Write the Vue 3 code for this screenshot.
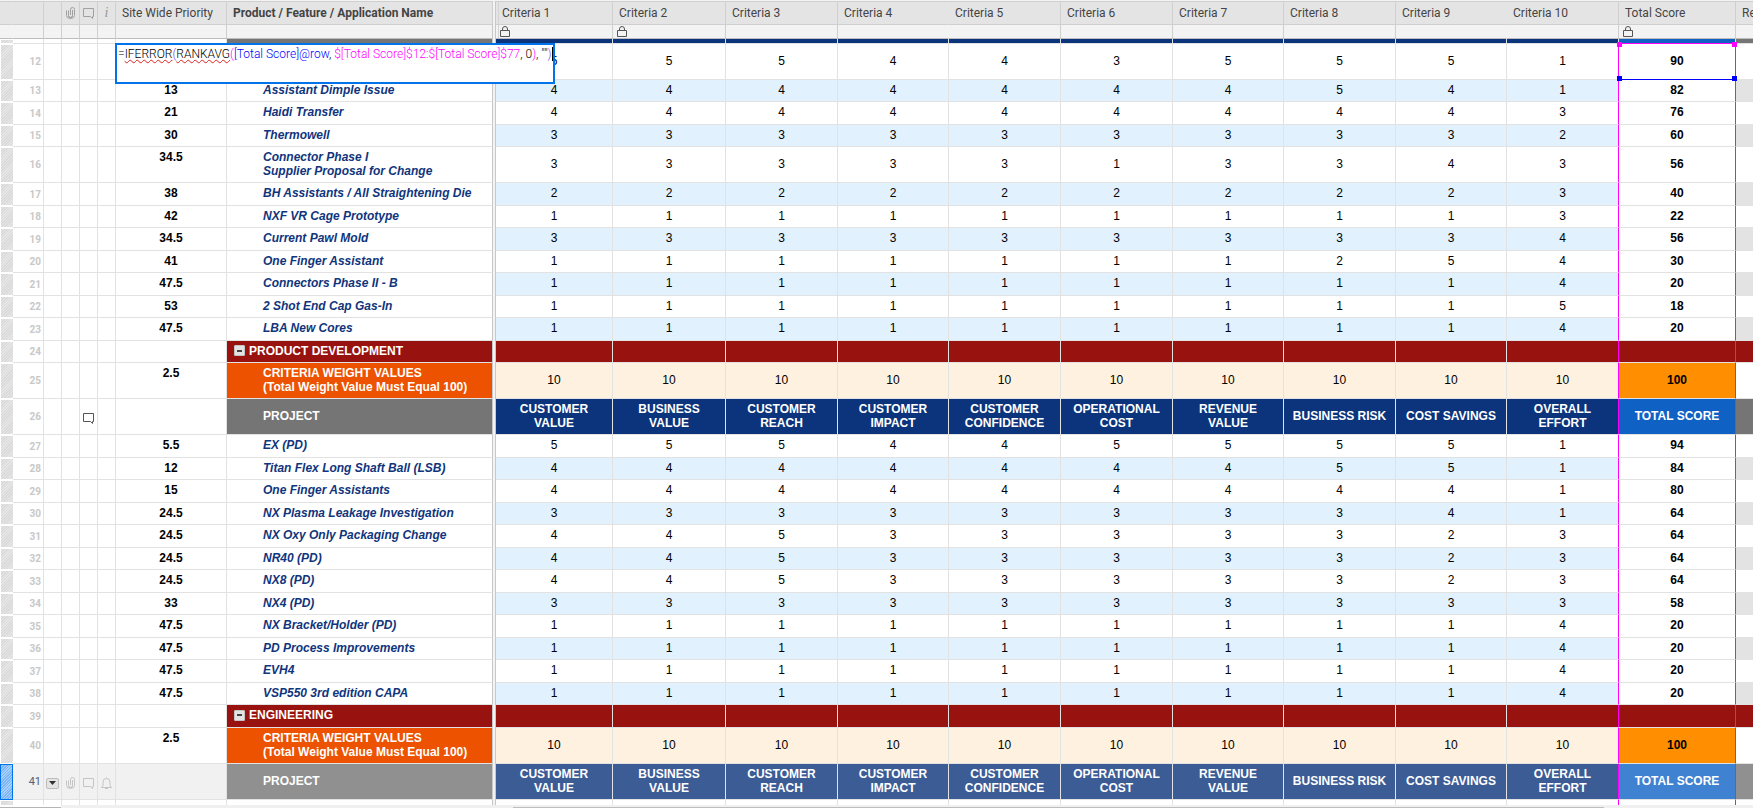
<template>
  <div class="sheet">
    <div class="top-strip"></div>
    <div class="grid-area">
      <table class="grid">
        <colgroup>
          <col v-for="(width, i) in columnWidths" :key="i" :style="{ width: width + 'px' }" />
          <col />
        </colgroup>
        <thead>
          <tr class="head-row">
            <td class="no-line"></td>
            <td></td>
            <td></td>
            <th scope="col" class="icon-cell" aria-label="Attachments">
              <svg class="icon" width="9" height="12" viewBox="0 0 9 12"><path :d="clipPath" /></svg>
            </th>
            <th scope="col" class="icon-cell" aria-label="Comments">
              <svg class="icon" width="12" height="11" viewBox="0 0 12 11"><path :d="commentPath" /></svg>
            </th>
            <th scope="col" class="icon-cell info">i</th>
            <th scope="col">Site Wide Priority</th>
            <th scope="col" class="primary">Product / Feature / Application Name</th>
            <td class="splitter"></td>
            <th
              v-for="n in 10"
              :key="n"
              scope="col"
              :class="{ 'no-line': n === 4 || n === 9, 'first-criteria': n === 1 }"
            >Criteria {{ n }}</th>
            <th scope="col">Total Score</th>
            <th scope="col" class="last">Re</th>
          </tr>
          <tr class="type-row">
            <td class="no-line"></td>
            <td></td>
            <td></td>
            <td></td>
            <td></td>
            <td></td>
            <td></td>
            <td></td>
            <td class="splitter"></td>
            <td
              v-for="n in 11"
              :key="n"
              :class="{ 'no-line': n === 4 || n === 9, 'first-criteria': n === 1 }"
            >
              <svg v-if="lockedColumns.includes(n)" class="lock" width="10" height="11" viewBox="0 0 10 11">
                <path d="M2.5 4.5V3a2.5 2.5 0 0 1 5 0v1.5M.5 4.5h9v6h-9z" />
              </svg>
            </td>
            <td class="last"></td>
          </tr>
        </thead>
        <tbody>
          <!-- lower edge of row 11, scrolled under the header -->
          <tr class="cut-row heading">
            <td class="gutter"></td>
            <td></td>
            <td></td>
            <td></td>
            <td></td>
            <td></td>
            <td></td>
            <td class="name"></td>
            <td class="splitter"></td>
            <td v-for="n in 10" :key="n" class="score"></td>
            <td class="total"></td>
            <td class="last"></td>
          </tr>
          <tr
            v-for="row in rows"
            :key="row.id"
            :class="[row.type, { tall: row.tall, short: shortRows.includes(row.id), band: row.band, selected: row.id === selectedRow }]"
          >
            <td class="gutter"></td>
            <td class="row-number">{{ row.id === 42 ? '' : row.id }}</td>
            <td class="icon-cell">
              <button v-if="row.id === selectedRow" class="row-menu" type="button" aria-label="Row actions">
                <svg width="7" height="4" viewBox="0 0 7 4"><path d="M0 0h7L3.5 4z" /></svg>
              </button>
            </td>
            <td class="icon-cell">
              <svg v-if="row.id === selectedRow" class="icon" width="9" height="12" viewBox="0 0 9 12"><path :d="clipPath" /></svg>
            </td>
            <td class="icon-cell">
              <svg v-if="row.comment || row.id === selectedRow" class="icon" width="12" height="11" viewBox="0 0 12 11"><path :d="commentPath" /></svg>
            </td>
            <td class="icon-cell">
              <svg v-if="row.id === selectedRow" class="icon bell" width="11" height="13" viewBox="0 0 11 13">
                <path d="M.5 10.5h10L9 8.5V5a3.5 3.5 0 0 0-7 0v3.5zM5.5 1.5V.5M4 11.5h3" />
              </svg>
            </td>
            <td class="priority">
              {{ row.priority }}
              <div
                v-if="row.id === 12"
                class="formula-editor"
                contenteditable="true"
                role="textbox"
                aria-label="Cell formula"
                spellcheck="false"
              >=<u>IFERROR</u><span class="ref-violet">(</span><u>RANKAVG</u><span class="ref-pink">(</span><span class="ref-blue">[Total Score]@row</span>, <span class="ref-pink">$[Total Score]$12:$[Total Score]$77</span>, 0<span class="ref-pink">)</span>, ""<span class="ref-violet">)</span><i class="caret"></i></div>
            </td>
            <td class="name">
              <div v-if="row.type === 'section'" class="section-name">
                <button class="toggle" type="button" :aria-label="'Collapse ' + row.name"></button>
                <span>{{ row.name }}</span>
              </div>
              <template v-else>{{ row.name }}</template>
            </td>
            <td class="splitter"></td>
            <td v-for="(score, i) in row.scores" :key="i" class="score">{{ score }}</td>
            <td class="total">
              {{ row.total }}
              <template v-if="row.id === 12">
                <span class="handle top left"></span>
                <span class="handle top right"></span>
                <span class="handle bottom left"></span>
                <span class="handle bottom right"></span>
              </template>
            </td>
            <td class="last"></td>
          </tr>
        </tbody>
      </table>
    </div>
    <div class="scroll-strip">
      <div class="strip-left"></div>
      <div class="track"><div class="thumb"></div></div>
    </div>
  </div>
</template>

<script setup>
import { ref } from 'vue';

const columnWidths = [13, 31, 18, 18, 18, 18, 111, 266, 3, 117, 113, 112, 111, 112, 112, 111, 112, 111, 112, 117];
const lockedColumns = [1, 2, 11];
const shortRows = [13, 15, 18, 20, 22, 24, 28, 30, 32, 34, 36, 38, 42];
const selectedRow = ref(41);

const clipPath = 'M2.5 3.5v5a2 2 0 0 0 4 0V3M6.5 8.5a2 2 0 0 1-4 0M4.5 8V3.5M.5 3.5v5a4 3 0 0 0 8 0V2.5a2 2 0 0 0-4 0V8';
const commentPath = 'M.5.5h10v8h-1v2l-2-2h-7z';

const same = (value, ...rest) => [...Array(10 - rest.length).fill(value), ...rest];

const item = (id, priority, name, scores, total, extra = {}) => ({ id, type: 'item', priority, name, scores, total, ...extra });
const section = (id, name) => ({ id, type: 'section', name, scores: same('') });
const weights = (id) => ({
  id,
  type: 'weights',
  tall: true,
  priority: '2.5',
  name: 'CRITERIA WEIGHT VALUES\n(Total Weight Value Must Equal 100)',
  scores: same(10),
  total: 100
});
const heading = (id, extra = {}) => ({
  id,
  type: 'heading',
  tall: true,
  name: 'PROJECT',
  scores: [
    'CUSTOMER\nVALUE', 'BUSINESS\nVALUE', 'CUSTOMER\nREACH', 'CUSTOMER\nIMPACT', 'CUSTOMER\nCONFIDENCE',
    'OPERATIONAL\nCOST', 'REVENUE\nVALUE', 'BUSINESS RISK', 'COST SAVINGS', 'OVERALL\nEFFORT'
  ],
  total: 'TOTAL SCORE',
  ...extra
});

const band = { band: true };

const rows = ref([
  item(12, '', '', [5, 5, 5, 4, 4, 3, 5, 5, 5, 1], 90, { tall: true }),
  item(13, '13', 'Assistant Dimple Issue', same(4, 5, 4, 1), 82, band),
  item(14, '21', 'Haidi Transfer', same(4, 3), 76),
  item(15, '30', 'Thermowell', same(3, 2), 60, band),
  item(16, '34.5', 'Connector Phase I\nSupplier Proposal for Change', same(3, 1, 3, 3, 4, 3), 56, { tall: true }),
  item(17, '38', 'BH Assistants / All Straightening Die', same(2, 3), 40, band),
  item(18, '42', 'NXF VR Cage Prototype', same(1, 3), 22),
  item(19, '34.5', 'Current Pawl Mold', same(3, 4), 56, band),
  item(20, '41', 'One Finger Assistant', same(1, 2, 5, 4), 30),
  item(21, '47.5', 'Connectors Phase II - B', same(1, 4), 20, band),
  item(22, '53', '2 Shot End Cap Gas-In', same(1, 5), 18),
  item(23, '47.5', 'LBA New Cores', same(1, 4), 20, band),
  section(24, 'PRODUCT DEVELOPMENT'),
  weights(25),
  heading(26, { comment: true }),
  item(27, '5.5', 'EX (PD)', [5, 5, 5, 4, 4, 5, 5, 5, 5, 1], 94),
  item(28, '12', 'Titan Flex Long Shaft Ball (LSB)', same(4, 5, 5, 1), 84, band),
  item(29, '15', 'One Finger Assistants', same(4, 1), 80),
  item(30, '24.5', 'NX Plasma Leakage Investigation', same(3, 4, 1), 64, band),
  item(31, '24.5', 'NX Oxy Only Packaging Change', [4, 4, 5, 3, 3, 3, 3, 3, 2, 3], 64),
  item(32, '24.5', 'NR40 (PD)', [4, 4, 5, 3, 3, 3, 3, 3, 2, 3], 64, band),
  item(33, '24.5', 'NX8 (PD)', [4, 4, 5, 3, 3, 3, 3, 3, 2, 3], 64),
  item(34, '33', 'NX4 (PD)', same(3), 58, band),
  item(35, '47.5', 'NX Bracket/Holder (PD)', same(1, 4), 20),
  item(36, '47.5', 'PD Process Improvements', same(1, 4), 20, band),
  item(37, '47.5', 'EVH4', same(1, 4), 20),
  item(38, '47.5', 'VSP550 3rd edition CAPA', same(1, 4), 20, band),
  section(39, 'ENGINEERING'),
  weights(40),
  heading(41),
  item(42, '', '', same(''), '')
]);
</script>

<style>
body {
  margin: 0;
  background: #fff;
}
</style>

<style scoped>
.sheet {
  display: flex;
  flex-direction: column;
  height: 100vh;
  overflow: hidden;
  font-family: "Liberation Sans", Arial, sans-serif;
  font-size: 12px;
  line-height: 14px;
  color: #000;
}

.top-strip {
  flex: none;
  height: 1px;
  background: #f3f3f3;
}

.grid-area {
  flex: 1;
  min-height: 0;
  overflow: hidden;
}

.grid {
  width: 100%;
  table-layout: fixed;
  border-collapse: separate;
  border-spacing: 0;
}

td,
th {
  box-sizing: border-box;
  padding: 0;
  border-right: 1px solid #e2e2e2;
  border-bottom: 1px solid #e2e2e2;
  white-space: pre-line;
}

/* header */
.head-row {
  height: 24px;
}

.head-row th,
.head-row td {
  border-top: 1px solid #cfcfcf;
  border-right-color: #cfcfcf;
  border-bottom-color: #cfcfcf;
  background-color: #e4e4e4;
}

.head-row th {
  padding: 0 0 0 6px;
  overflow: hidden;
  font-family: Roboto, sans-serif;
  font-weight: 400;
  color: #444;
  text-align: left;
  white-space: nowrap;
}

.head-row th.primary {
  font-weight: 700;
}

.head-row th.icon-cell {
  padding: 0;
  text-align: center;
}

.head-row th.info {
  font-family: "Liberation Serif", serif;
  font-size: 14px;
  font-style: italic;
  color: #999;
}

.type-row {
  height: 14px;
}

.type-row td {
  height: 13px;
  border-right-color: #cfcfcf;
  border-bottom-color: #bdbdbd;
  background-color: #f3f3f3;
  line-height: 0;
  vertical-align: middle;
}

.head-row .no-line {
  border-right-color: #e4e4e4;
}

.type-row .no-line {
  border-right-color: #f3f3f3;
}

.head-row .first-criteria,
.type-row .first-criteria {
  background-image: linear-gradient(#d4d4d4, #d4d4d4);
  background-position: 2px 0;
  background-size: 1px 100%;
  background-repeat: no-repeat;
}

.lock {
  display: block;
  margin-left: 4px;
  fill: none;
  stroke: #555;
}

/* rows */
tbody tr {
  height: 23px;
}

tbody tr.short {
  height: 22px;
}

tbody tr.tall {
  height: 36px;
}

tbody tr.cut-row {
  height: 5px;
}

tbody .gutter {
  border: 1px solid #fff;
  border-right: 0;
  background: repeating-linear-gradient(135deg, #dadada 0 1px, #e6e6e6 1px 2px) padding-box;
}

.row-number {
  padding: 1px 2px 0 0;
  font-family: Roboto, sans-serif;
  font-size: 10px;
  font-weight: 700;
  color: #c8c8c8;
  text-align: right;
}

.icon-cell {
  line-height: 0;
  text-align: center;
  vertical-align: middle;
}

tbody .icon-cell {
  padding-top: 3px;
}

.info {
  line-height: 14px;
}

.icon {
  display: block;
  margin: 0 auto;
  fill: none;
  stroke: #555;
}

.head-row .icon {
  stroke: #a0a0a0;
}

.priority {
  position: relative;
  padding: 3px 0 0;
  font-weight: 700;
  text-align: center;
  vertical-align: top;
}

.name {
  padding: 1px 0 3px 36px;
  font-weight: 700;
  font-style: italic;
  color: #10357c;
}

.score,
.total {
  padding: 1px 0 3px;
  text-align: center;
}

.total {
  position: relative;
  font-weight: 700;
}

tbody tr:not(.cut-row) .score:nth-last-child(3),
tbody tr:not(.cut-row) .total {
  border-right-color: #f0f;
}

.cut-row .total {
  border-bottom-color: #f0f;
}

tbody tr:nth-child(2) .total {
  border-bottom-color: #00f;
}

td.last,
th.last {
  border-right: 0;
}

.splitter,
.head-row .splitter,
.type-row .splitter {
  border-top: 0;
  border-right: 1px solid #c8c8c8;
  border-bottom: 0;
  background: #f3f3f3;
}

.primary,
.name,
.type-row td:nth-child(8) {
  border-right-color: #c8c8c8;
}

.band .score {
  background: #e1f1fe;
}

.band .last {
  background: #e3e3e3;
}

.section .name,
.section .score,
.section .total,
.section .last {
  background: #98130f;
}

.section .name {
  padding-left: 7px;
}

.section-name {
  display: flex;
  align-items: center;
  gap: 4px;
}

.toggle {
  display: flex;
  align-items: center;
  justify-content: center;
  width: 11px;
  height: 11px;
  padding: 0;
  border: 1px solid #c4c4c4;
  border-radius: 1px;
  background: #e3e3e3;
}

.toggle::before {
  content: "";
  width: 5px;
  height: 2px;
  background: #444;
}

.section .name,
.weights .name,
.heading .name {
  font-style: normal;
  color: #fff;
}

.weights .name {
  background: #ec5200;
}

.weights .score {
  background: #fff1df;
}

.weights .total {
  background: #ff8f00;
}

.heading .name,
.heading .last {
  background: #757575;
}

.heading .score {
  background: #0b347c;
  font-weight: 700;
  color: #fff;
}

.heading .total {
  background: #1061c4;
  color: #fff;
}

.cut-row .name,
.cut-row .score,
.cut-row .total {
  padding: 0;
}

/* selected row */
.selected td {
  background: #f1f1f1;
}

.selected .gutter {
  border: 1px solid #0073ea;
  background: repeating-linear-gradient(135deg, #7ab6f6 0 1px, #a9d0fa 1px 2px);
}

.selected .row-number {
  font-size: 11px;
  font-weight: 400;
  color: #555f75;
}

.selected .icon {
  stroke: #c4c4c4;
}

.selected .name,
.selected .last {
  background: #909090;
}

.selected .score {
  background: #3c5c96;
}

.selected .total {
  background: #3f82d1;
}

.row-menu {
  display: flex;
  align-items: center;
  justify-content: center;
  width: 13px;
  height: 11px;
  margin: 0 auto;
  padding: 0;
  border: 1px solid #bcbcbc;
  border-radius: 2px;
  background: #e4e4e4;
}

.row-menu svg {
  fill: #333;
}

/* formula editor over row 12 */
.formula-editor {
  position: absolute;
  top: -1px;
  left: -1px;
  z-index: 2;
  box-sizing: border-box;
  width: 440px;
  height: 41px;
  padding: 2px 0 2px 1px;
  border: 2px solid #0073ea;
  outline: none;
  background: #fff;
  font-family: Roboto, sans-serif;
  font-size: 12px;
  font-weight: 300;
  text-align: left;
  white-space: nowrap;
}

.formula-editor u {
  text-decoration: underline wavy #e02020 1px;
  text-decoration-skip-ink: none;
}

.ref-blue {
  color: #00f;
}

.ref-pink {
  color: #f0f;
}

.ref-violet {
  color: #7a3cff;
}

.caret {
  display: inline-block;
  width: 1px;
  height: 14px;
  background: #000;
  vertical-align: top;
}

/* range corners */
.handle {
  position: absolute;
  z-index: 1;
  width: 5px;
  height: 5px;
}

.handle.top {
  top: -2px;
  background: #f0f;
}

.handle.bottom {
  bottom: -2px;
  background: #00f;
}

.handle.left {
  left: -2px;
}

.handle.right {
  right: -2px;
}

/* horizontal scroll bar */
.scroll-strip {
  display: flex;
  flex: none;
  height: 3px;
}

.strip-left {
  box-sizing: border-box;
  width: 61px;
  border-bottom: 1px solid #b5b5b5;
}

.track {
  display: flex;
  flex: 1;
  align-items: flex-end;
  padding-left: 452px;
  background: #f0f0f0;
}

.thumb {
  width: 88%;
  height: 1px;
  background: #bdbdbd;
}
</style>
